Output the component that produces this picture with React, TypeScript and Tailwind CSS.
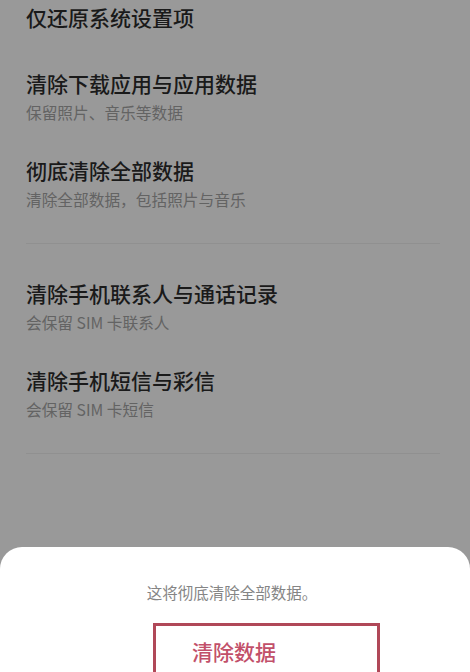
import React from 'react';

type Item = { title: string; sub?: string };

const groupA: Item[] = [
  { title: '清除下载应用与应用数据', sub: '保留照片、音乐等数据' },
  { title: '彻底清除全部数据', sub: '清除全部数据，包括照片与音乐' },
];

const groupB: Item[] = [
  { title: '清除手机联系人与通话记录', sub: '会保留 SIM 卡联系人' },
  { title: '清除手机短信与彩信', sub: '会保留 SIM 卡短信' },
];

function Row({ item }: { item: Item }) {
  return (
    <div>
      <p className="text-[21px] font-medium leading-[30px] text-[#1a1a1a]">{item.title}</p>
      {item.sub && <p className="mt-[3px] text-[15.7px] leading-[24px] text-[#636363]">{item.sub}</p>}
    </div>
  );
}

export default function App() {
  return (
    <div
      className="flex h-[672px] w-[470px] flex-col overflow-hidden bg-[#999999]"
      style={{ fontFamily: '"Noto Sans CJK SC", "Noto Sans", sans-serif' }}
    >
      <div className="pl-[26px] pr-[30px] pt-[2px]">
        <p className="text-[21px] font-medium leading-[30px] text-[#1a1a1a]">仅还原系统设置项</p>

        <div className="mt-[36px] flex flex-col gap-[30px]">
          {groupA.map((it) => <Row key={it.title} item={it} />)}
        </div>

        <div className="mt-[31px] h-px bg-[#909090]" />

        <div className="mt-[34px] flex flex-col gap-[30px]">
          {groupB.map((it) => <Row key={it.title} item={it} />)}
        </div>

        <div className="mt-[31px] h-px bg-[#909090]" />
      </div>

      <div className="mt-auto h-[125px] rounded-t-[22px] bg-white pt-[33px]">
        <p className="pr-[6px] text-center text-[15.5px] leading-[24px] text-[#858585]">这将彻底清除全部数据。</p>
        <div className="ml-[153px] mt-[19px] h-[70px] w-[227px] border-[3px] border-[#b04858] pl-[36px] pt-[10px]">
          <span className="text-[21px] font-medium leading-[30px] text-[#c2506a]">清除数据</span>
        </div>
      </div>
    </div>
  );
}
